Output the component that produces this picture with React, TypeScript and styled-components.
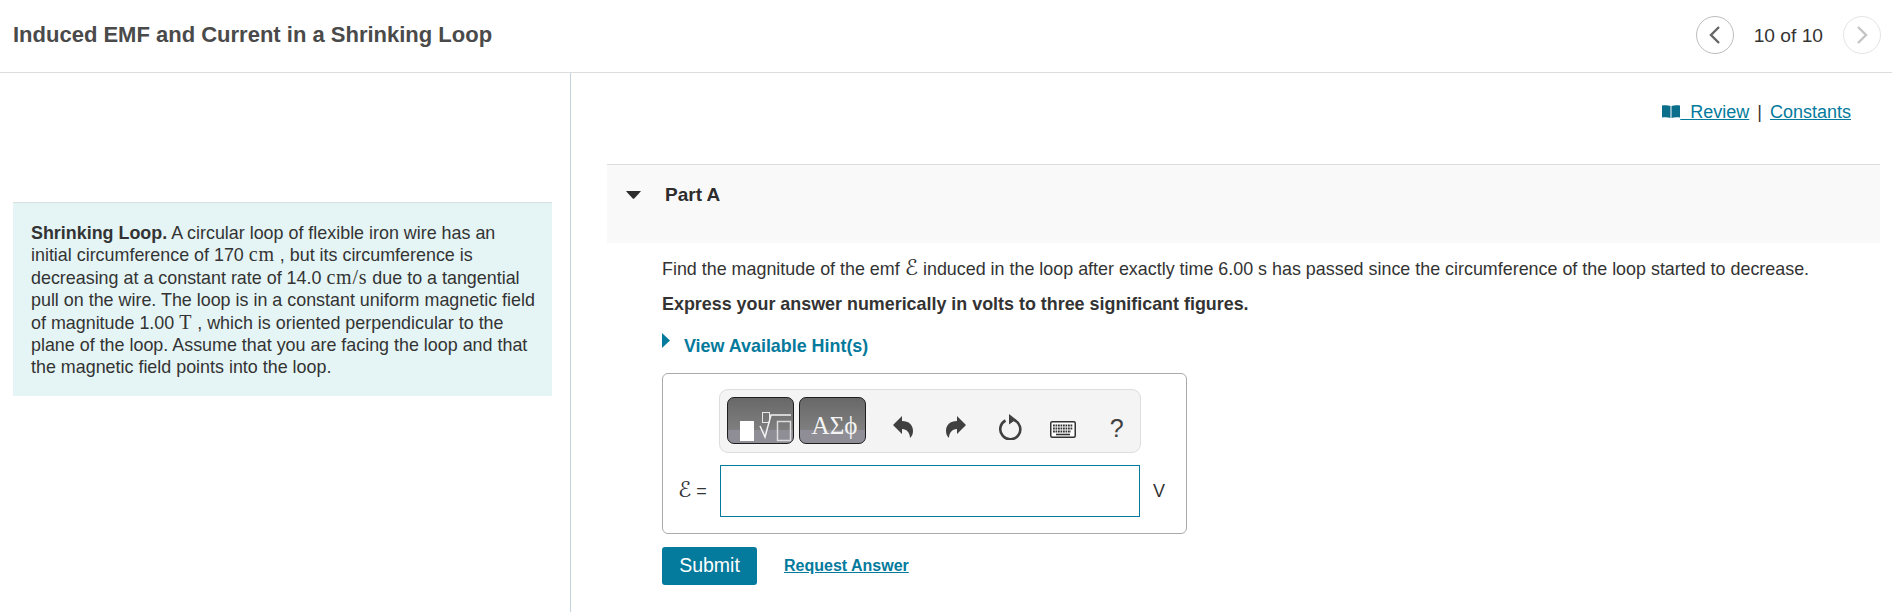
import React from "react";
import styled, { createGlobalStyle } from "styled-components";

const Global = createGlobalStyle`
  html, body { margin: 0; padding: 0; background: #fff; }
  body { font-family: "Liberation Sans", Arial, sans-serif; color: #333; overflow: hidden; }
`;

const Page = styled.div`
  width: 1892px;
  height: 612px;
  display: flex;
  flex-direction: column;
`;

const Header = styled.header`
  height: 72px;
  flex: none;
  box-sizing: content-box;
  border-bottom: 1px solid #ddd;
  display: flex;
  align-items: center;
  justify-content: space-between;
  padding: 0 11px 0 13px;
`;

const Title = styled.h1`
  margin: 0 0 2px;
  font-size: 22px;
  font-weight: 700;
  color: #4a4a4a;
`;

const Pager = styled.div`
  display: flex;
  align-items: center;
  margin-top: -3px;
`;

const RoundButton = styled.div<{ $off?: boolean }>`
  width: 38px;
  height: 38px;
  box-sizing: border-box;
  border-radius: 50%;
  border: 1px solid ${(p) => (p.$off ? "#e4e4e4" : "#bdbdbd")};
  color: ${(p) => (p.$off ? "#c4c4c4" : "#666")};
  display: flex;
  align-items: center;
  justify-content: center;
`;

const PageCount = styled.span`
  font-size: 19.2px;
  color: #333;
  margin: 3px 20px 0;
`;

const Body = styled.div`
  flex: 1;
  display: flex;
  min-height: 0;
`;

const LeftPane = styled.aside`
  width: 571px;
  flex: none;
  box-sizing: border-box;
  border-right: 1px solid #c4d2dc;
  padding: 129px 18px 0 13px;
`;

const Intro = styled.div`
  background: #e5f5f5;
  border-top: 1px solid #d9dfe0;
  height: 194px;
  box-sizing: border-box;
  padding: 19px 12px 0 18px;
  font-size: 17.9px;
  line-height: 22.4px;
  color: #333;
`;

const MathText = styled.span`
  font-family: "Liberation Serif", serif;
  font-size: 20px;
  line-height: 0;
  letter-spacing: 0.8px;
`;

const Script = styled.span`
  font-family: "DejaVu Sans", sans-serif;
  font-style: italic;
  font-size: 22px;
  line-height: 0;
`;

const RightPane = styled.main`
  flex: 1;
  min-width: 0;
  padding: 0 12px 0 36px;
`;

const Resources = styled.div`
  height: 91px;
  box-sizing: border-box;
  padding: 29px 29px 0 0;
  display: flex;
  justify-content: flex-end;
  align-items: flex-start;
  font-size: 18px;
  line-height: 21px;
`;

const TextLink = styled.a`
  color: #047a9c;
  text-decoration: underline;
`;

const ReviewLink = styled(TextLink)`
  display: inline-flex;
  align-items: center;
  white-space: pre;
`;

const BookIcon = styled.svg`
  width: 18px;
  height: 13px;
  margin-top: -3px;
`;

const Sep = styled.span`
  margin: 0 8px;
  color: #333;
`;

const PartHead = styled.div`
  height: 79px;
  box-sizing: border-box;
  border-top: 1px solid #ddd;
  background: #f9f9f9;
  padding: 18px 0 0 19px;
  display: flex;
  align-items: flex-start;
  gap: 24px;
`;

const PartTitle = styled.h2`
  margin: 0;
  font-size: 19px;
  line-height: 24px;
  font-weight: 700;
  color: #2d2d2d;
`;

const CaretDown = styled.svg`
  width: 15px;
  height: 8px;
  margin-top: 8px;
  flex: none;
`;

const PartBody = styled.div`
  padding: 15px 0 0 55px;
`;

const Para = styled.p<{ $bold?: boolean }>`
  margin: 0 0 13px;
  font-size: 17.9px;
  line-height: 22px;
  color: #333;
  font-weight: ${(p) => (p.$bold ? 700 : 400)};
`;

const Hint = styled.div`
  display: flex;
  align-items: flex-start;
  gap: 14px;
  margin-top: 20px;
  font-size: 17.9px;
  line-height: 22px;
  font-weight: 700;
  color: #047a9c;
`;

const CaretRight = styled.svg`
  width: 8px;
  height: 15px;
  margin-top: -2px;
  flex: none;
`;

const AnswerBox = styled.div`
  width: 525px;
  height: 161px;
  box-sizing: border-box;
  margin-top: 16px;
  border: 1px solid #aaa;
  border-radius: 6px;
  padding: 15px 0 0 56px;
`;

const Toolbar = styled.div`
  width: 422px;
  height: 64px;
  box-sizing: border-box;
  border: 1px solid #ddd;
  border-radius: 9px;
  background: #f4f4f4;
  padding: 7px;
  display: flex;
  align-items: flex-start;
  gap: 5px;
`;

const TemplateButton = styled.div`
  width: 67px;
  height: 47px;
  flex: none;
  box-sizing: border-box;
  border: 1px solid #1e1e1e;
  border-radius: 7px;
  background: linear-gradient(#686868 0, #7f7f7f 71%, #8f8e96 71%, #8f8e96 100%);
  display: flex;
  align-items: flex-end;
  justify-content: center;
  overflow: hidden;
`;

const Greek = styled.span`
  font-family: "Liberation Serif", serif;
  font-size: 25px;
  line-height: 34px;
  color: #f4f4f4;
  margin-left: 4px;
`;

const Tools = styled.div`
  display: flex;
  margin-left: 5px;
  height: 100%;
`;

const ToolSlot = styled.div<{ $drop?: number }>`
  width: 53.5px;
  display: flex;
  align-items: center;
  justify-content: center;
  padding-top: ${(p) => 11 + (p.$drop ?? 0)}px;
  color: #404040;
`;

const Help = styled.span`
  font-size: 25px;
  line-height: 24px;
  color: #404040;
`;

const InputRow = styled.div`
  display: flex;
  align-items: center;
  margin-top: 12px;
  margin-left: -41px;
`;

const Label = styled.div`
  width: 42px;
  flex: none;
  font-size: 18px;
  color: #333;
  white-space: pre;
`;

const Field = styled.div`
  width: 420px;
  height: 52px;
  flex: none;
  box-sizing: border-box;
  border: 1px solid #047a9c;
  background: #fff;
`;

const Unit = styled.span`
  margin-left: 13px;
  font-size: 18px;
  color: #333;
`;

const Actions = styled.div`
  display: flex;
  align-items: center;
  margin-top: 13px;
  gap: 27px;
`;

const Submit = styled.button`
  width: 95px;
  height: 38px;
  border: 0;
  border-radius: 3px;
  background: #047a9c;
  color: #fff;
  font: 400 19.5px "Liberation Sans", Arial, sans-serif;
  padding: 0 0 2px;
`;

const RequestLink = styled(TextLink)`
  font-size: 16px;
  font-weight: 700;
`;

export default function App() {
  return (
    <Page>
      <Global />
      <Header>
        <Title>Induced EMF and Current in a Shrinking Loop</Title>
        <Pager>
          <RoundButton>
            <svg width="14" height="20" viewBox="0 0 14 20" fill="none">
              <path d="M11 2 L3 10 L11 18" stroke="currentColor" strokeWidth="2.4" />
            </svg>
          </RoundButton>
          <PageCount>10 of 10</PageCount>
          <RoundButton $off>
            <svg width="14" height="20" viewBox="0 0 14 20" fill="none">
              <path d="M3 2 L11 10 L3 18" stroke="currentColor" strokeWidth="2.4" />
            </svg>
          </RoundButton>
        </Pager>
      </Header>
      <Body>
        <LeftPane>
          <Intro>
            <b>Shrinking Loop.</b> A circular loop of flexible iron wire has an initial circumference of 170 <MathText>cm</MathText> , but its circumference is decreasing at a constant rate of 14.0 <MathText>cm/s</MathText> due to a tangential pull on the wire. The loop is in a constant uniform magnetic field of magnitude 1.00 <MathText>T</MathText> , which is oriented perpendicular to the plane of the loop. Assume that you are facing the loop and that the magnetic field points into the loop.
          </Intro>
        </LeftPane>
        <RightPane>
          <Resources>
            <ReviewLink href="#">
              <BookIcon viewBox="0 0 18 13">
                <path d="M0 0.5 C3 0 6 0 8.5 1 V13 C6 12 3 12 0 12.5 Z M9.5 1 C12 0 15 0 18 0.5 V12.5 C15 12 12 12 9.5 13 Z" fill="#0b6f8c" />
              </BookIcon>
              {"  Review"}
            </ReviewLink>
            <Sep>|</Sep>
            <TextLink href="#">Constants</TextLink>
          </Resources>
          <PartHead>
            <CaretDown viewBox="0 0 15 8">
              <path d="M0.5 0 H14.5 Q15 0 14.5 0.7 L8 7.7 Q7.5 8 7 7.7 L0.5 0.7 Q0 0 0.5 0 Z" fill="#2d2d2d" />
            </CaretDown>
            <PartTitle>Part A</PartTitle>
          </PartHead>
          <PartBody>
            <Para>
              Find the magnitude of the emf <Script>ℰ</Script> induced in the loop after exactly time 6.00 s has passed since the circumference of the loop started to decrease.
            </Para>
            <Para $bold>Express your answer numerically in volts to three significant figures.</Para>
            <Hint>
              <CaretRight viewBox="0 0 8 15">
                <path d="M0 0 L8 7.5 L0 15 Z" fill="#047a9c" />
              </CaretRight>
              View Available Hint(s)
            </Hint>
            <AnswerBox>
              <Toolbar>
                <TemplateButton>
                  <svg width="65" height="45" viewBox="0 0 65 45">
                    <rect x="12" y="23" width="14" height="20" fill="#fff" />
                    <rect x="34.5" y="14.5" width="7" height="10" fill="none" stroke="#e8e8e8" />
                    <path d="M32 28 L37 39 L43 17 H63" fill="none" stroke="#f2f2f2" strokeWidth="1.5" />
                    <rect x="49.5" y="23.5" width="13" height="19" fill="none" stroke="#dcdcdc" strokeWidth="1.5" />
                  </svg>
                </TemplateButton>
                <TemplateButton>
                  <Greek>ΑΣϕ</Greek>
                </TemplateButton>
                <Tools>
                  <ToolSlot>
                    <svg width="20" height="22" viewBox="0 0 20 22">
                      <path d="M0 9 L9 0 V5 C16 5 20 9 20 15 C20 18 19 20 17 22 C17 17 14 13 9 13 V18 Z" fill="currentColor" />
                    </svg>
                  </ToolSlot>
                  <ToolSlot>
                    <svg width="20" height="22" viewBox="0 0 20 22">
                      <path d="M20 9 L11 0 V5 C4 5 0 9 0 15 C0 18 1 20 3 22 C3 17 6 13 11 13 V18 Z" fill="currentColor" />
                    </svg>
                  </ToolSlot>
                  <ToolSlot>
                    <svg width="24" height="26" viewBox="0 0 24 26">
                      <path d="M7.5 6.5 A10 10 0 1 0 16 6" fill="none" stroke="currentColor" strokeWidth="2.6" />
                      <path d="M11 0 L18 5.5 L11 10.5 Z" fill="currentColor" />
                    </svg>
                  </ToolSlot>
                  <ToolSlot $drop={6}>
                    <svg width="26" height="17" viewBox="0 0 26 17">
                      <rect x="0.75" y="0.75" width="24.5" height="15.5" rx="1.5" fill="#fff" stroke="#333" strokeWidth="1.5" />
                      <path d="M3 4.5 H23 M3 7.5 H23 M3 10.5 H21" stroke="#333" strokeWidth="1.8" strokeDasharray="1.8 0.7" />
                      <path d="M6 13.5 H20" stroke="#333" strokeWidth="1.6" />
                    </svg>
                  </ToolSlot>
                  <ToolSlot $drop={3}>
                    <Help>?</Help>
                  </ToolSlot>
                </Tools>
              </Toolbar>
              <InputRow>
                <Label>
                  <Script>ℰ</Script>
                  {" ="}
                </Label>
                <Field />
                <Unit>V</Unit>
              </InputRow>
            </AnswerBox>
            <Actions>
              <Submit>Submit</Submit>
              <RequestLink href="#">Request Answer</RequestLink>
            </Actions>
          </PartBody>
        </RightPane>
      </Body>
    </Page>
  );
}
